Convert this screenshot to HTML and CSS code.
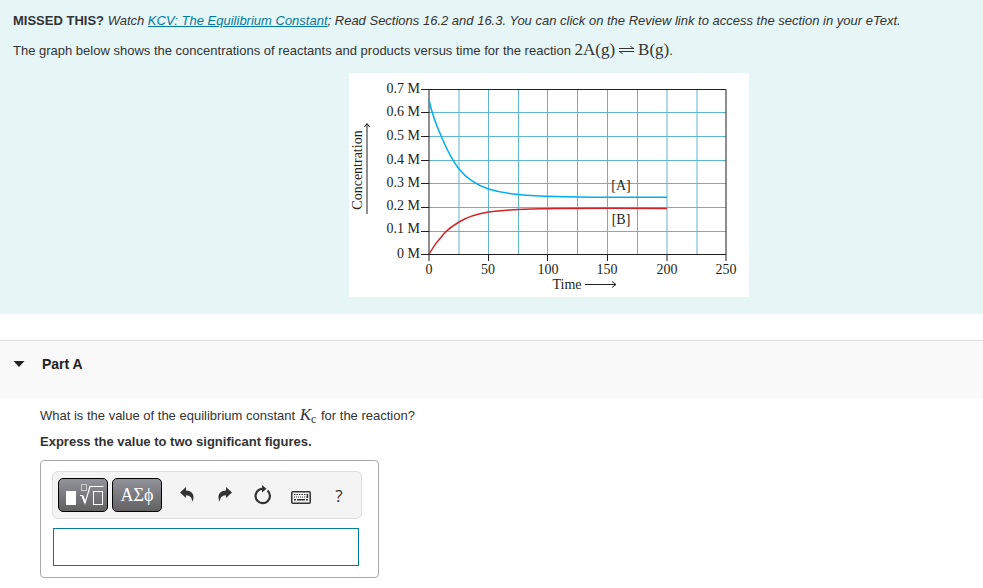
FILE: index.html
```html
<!DOCTYPE html>
<html lang="en">

<head>
    <meta charset="UTF-8">
    <meta name="viewport" content="width=device-width, initial-scale=1.0">
    <title>The Equilibrium Constant</title>
    <link rel="stylesheet" href="styles.css">
</head>

<body>
    <!-- Problem introduction -->
    <section class="intro">
        <p><strong>MISSED THIS?</strong> <em>Watch <a href="#">KCV: The Equilibrium Constant</a>; Read Sections 16.2 and 16.3. You can click on the Review link to access the section in your eText.</em></p>
        <p>The graph below shows the concentrations of reactants and products versus time for the reaction <span class="math">2A(g)<svg class="equilibrium" width="17" height="10" viewBox="0 0 17 10" role="img" aria-label="in equilibrium with"><path d="M1 3.5H16M12.5 1Q13.5 3 16 3.5M1 6.5H16M4.5 9Q3.5 7 1 6.5" /></svg>B(g)</span>.</p>

        <svg class="graph" width="400" height="224" viewBox="0 0 400 224" role="img" aria-label="Concentration versus time">
            <rect width="400" height="224" fill="#fff" />
            <!-- Grid -->
            <path class="grid" d="M110 17V181M139.5 17V181M169.5 17V181M198.5 17V181M228.5 17V181M258.5 17V181M288.5 17V181M318 17V181M348 17V181M80 39.5H377M80 63.5H377M80 87.5H377M80 110.5H377M80 134.5H377M80 158.5H377" />
            <!-- Axes and ticks -->
            <path class="axis" d="M72 16.5H377V188M72 181.5H377M80 16V188M72 39.5H80M72 63.5H80M72 87.5H80M72 110.5H80M72 134.5H80M72 158.5H80M139.5 182V188M198.5 182V188M258.5 182V188M318 182V188" />
            <!-- Curves -->
            <path class="curve-a" d="M80 27C83 41 88 54 93 65C98 77 103 87 110 96C118 106 128 112 139.5 116C149 119 158 120.5 169.5 121.5C186 123 222 124.2 258 124.2H318" />
            <path class="curve-b" d="M80 181C84 174 90 166 96 159.5C100 155.500 105 152 110 149C119 143.500 130 140.5 139.5 139C149 137.800 158 137.2 169.5 136.5C186 135.5 222 135.2 258 135.2L318 135.5" />
            <g class="labels y-labels">
                <text x="71" y="20">0.7 M</text>
                <text x="71" y="43">0.6 M</text>
                <text x="71" y="67">0.5 M</text>
                <text x="71" y="91">0.4 M</text>
                <text x="71" y="114">0.3 M</text>
                <text x="71" y="137">0.2 M</text>
                <text x="71" y="160">0.1 M</text>
                <text x="71" y="185">0 M</text>
            </g>
            <g class="labels x-labels">
                <text x="80" y="201">0</text>
                <text x="139" y="201">50</text>
                <text x="199" y="201">100</text>
                <text x="258" y="201">150</text>
                <text x="318" y="201">200</text>
                <text x="377" y="201">250</text>
                <text x="218" y="216">Time</text>
                <text x="272" y="117">[A]</text>
                <text x="272" y="151">[B]</text>
                <text transform="translate(13 97) rotate(-90)">Concentration</text>
            </g>
            <path class="arrow" d="M18 141V51M15.5 54L18 50.5L20.5 54M236 211.5H266M263 208.5L267 211.5L263 214.5" />
        </svg>
    </section>

    <!-- Part A -->
    <section class="part">
        <h2 class="part-header">
            <button type="button" class="part-toggle">
                <svg width="12" height="6" viewBox="0 0 12 6" aria-hidden="true"><path d="M0.5 0H11.5L6 6Z" fill="#222" /></svg>
                Part A
            </button>
        </h2>
        <div class="part-body">
            <p><label for="answer">What is the value of the equilibrium constant <span class="math variable"><i>K</i><sub>c</sub></span> for the reaction?</label></p>
            <p><strong>Express the value to two significant figures.</strong></p>

            <div class="answer-box">
                <div class="toolbar">
                    <button type="button" class="palette" aria-label="Templates">
                        <svg width="48" height="32" viewBox="0 0 48 32" fill="none" stroke="#fff">
                            <rect x="7" y="12" width="10" height="14" fill="#fff" stroke="none" />
                            <rect x="22.5" y="5.5" width="5" height="6" stroke="#ccc" />
                            <path d="M21 16.5H23.5L26 24L31 7.5H44.5" stroke-width="1.2" />
                            <path d="M23.5 17L26 23.5" stroke-width="2" />
                            <rect x="34.5" y="12.5" width="9" height="13" />
                        </svg>
                    </button>
                    <button type="button" class="palette greek">ΑΣϕ</button>
                    <div class="tools">
                        <button type="button" class="tool" aria-label="Undo">
                            <svg width="16" height="16" viewBox="0 0 16 16"><path d="M1 5.5L7 0V3.500C12 3.500 14.500 6.5 14.500 10C14.500 12 14 13.5 13 15C13.300 11 11.500 8.500 7 8.300V11Z" /></svg>
                        </button>
                        <button type="button" class="tool" aria-label="Redo">
                            <svg width="16" height="16" viewBox="0 0 16 16"><path d="M15 5.5L9 0V3.500C4 3.500 1.500 6.5 1.500 10C1.500 12 2 13.5 3 15C2.700 11 4.500 8.500 9 8.300V11Z" /></svg>
                        </button>
                        <button type="button" class="tool" aria-label="Reset">
                            <svg width="18" height="20" viewBox="0 0 18 20"><path d="M13.5 5.500A7.200 7.200 0 1 1 5 4.800Q7 3.500 9.500 3.800" fill="none" stroke="#333" stroke-width="2.2" /><path d="M8 0L12.5 3.800L8 7.500Z" /></svg>
                        </button>
                        <button type="button" class="tool" aria-label="Keyboard shortcuts">
                            <svg class="keyboard" width="20" height="13" viewBox="0 0 20 13" fill="none" stroke="#333"><rect x="0.8" y="0.8" width="18.4" height="11.4" rx="1" stroke-width="1.5" /><path d="M3 3.5H17" stroke-dasharray="1.5 1" /><path d="M3 6H16" stroke-dasharray="1 1" /><path d="M3 8.8H5M6 8.8H14M15 8.8H17M16.5 3V7" stroke-width="1.4" /></svg>
                        </button>
                        <button type="button" class="tool help" aria-label="Help">?</button>
                    </div>
                </div>
                <input type="text" id="answer" class="answer-input">
            </div>
        </div>
    </section>
</body>

</html>
```
FILE: styles.css
```css
body {
    font-family: "Liberation Sans", Arial, sans-serif;
    font-size: 13px;
    line-height: 20px;
    margin: 0;
    color: #333;
    background-color: #fff;
}

p {
    margin: 0;
}

button {
    font-family: inherit;
    color: inherit;
    padding: 0;
    border: none;
    background: none;
    cursor: pointer;
}

/* Introduction */
.intro {
    display: flex;
    flex-direction: column;
    gap: 10px;
    padding: 11px 13px 17px;
    background-color: #e6f5f6;
}

.intro a {
    color: #047a9c;
}

.math {
    font-family: "Liberation Serif", "Times New Roman", serif;
    font-size: 17px;
    line-height: 16px;
}

.math sub {
    font-size: 12px;
    line-height: 0;
    vertical-align: -3px;
}

.variable {
    margin: 0 1px;
}

.equilibrium {
    margin: 0 3px;
    fill: none;
    stroke: #333;
}

/* Graph */
.graph {
    align-self: center;
    margin-left: 115px;
    margin-top: 2px;
}

.grid {
    fill: none;
    stroke: #62b4d3;
}

.axis,
.arrow {
    fill: none;
    stroke: #231f20;
}

.curve-a,
.curve-b {
    fill: none;
    stroke: #00aeef;
    stroke-width: 1.5;
}

.curve-b {
    stroke: #d2232a;
}

.labels {
    font-family: "Liberation Serif", "Times New Roman", serif;
    font-size: 14px;
    fill: #231f20;
}

.y-labels {
    text-anchor: end;
}

.x-labels {
    text-anchor: middle;
}

/* Part A */
.part {
    margin-top: 26px;
}

.part-header {
    margin: 0;
    padding: 13px;
    border-top: 1px solid #ddd;
    background-color: #f9f9f9;
}

.part-toggle {
    display: flex;
    align-items: center;
    gap: 17px;
    height: 20px;
    margin-bottom: 11px;
    font-size: 14px;
    font-weight: bold;
    color: #222;
}

.part-body {
    display: flex;
    flex-direction: column;
    align-items: flex-start;
    gap: 6px;
    padding: 8px 40px;
}

.answer-box {
    display: flex;
    flex-direction: column;
    gap: 9px;
    margin-top: 2px;
    padding: 10px 16px 11px 11px;
    border: 1px solid #aaa;
    border-radius: 4px;
}

.toolbar {
    display: flex;
    align-items: center;
    gap: 4px;
    padding: 6px 5px;
    border: 1px solid #ddd;
    border-radius: 6px;
    background-color: #f4f4f4;
}

.palette {
    width: 50px;
    height: 34px;
    border: 1px solid #000;
    border-radius: 5px;
    background: linear-gradient(#92929a, #626262);
    color: #fff;
}

.palette svg {
    display: block;
}

.greek {
    font-family: "Liberation Serif", "Times New Roman", serif;
    font-size: 18px;
}

.tools {
    display: flex;
    gap: 4px;
    margin-left: 4px;
}

.tool {
    display: flex;
    align-items: center;
    justify-content: center;
    width: 34px;
    height: 34px;
    fill: #333;
}

.keyboard {
    margin-top: 4px;
}

.help {
    font-family: "Open Sans", sans-serif;
    font-size: 17px;
}

.answer-input {
    box-sizing: border-box;
    width: 306px;
    height: 38px;
    margin-left: 1px;
    padding: 4px 8px;
    border: 1px solid #047a9c;
    font-size: 16px;
}
```
